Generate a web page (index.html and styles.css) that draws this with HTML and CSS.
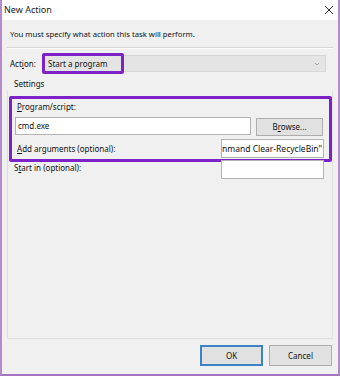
FILE: index.html
```html
<!DOCTYPE html>
<html>
<head>
<meta charset="utf-8">
<link rel="stylesheet" href="styles.css">
</head>
<body>
<div class="window">
  <div class="titlebar">
    <span class="title">New Action</span>
    <svg class="close" width="10" height="10" viewBox="0 0 10 10"><path d="M1 1L9 9M9 1L1 9" stroke="#333" stroke-width="1" fill="none"/></svg>
  </div>
  <div class="body">
    <p class="intro">You must specify what action this task will perform.</p>
    <div class="sep"></div>
    <div class="action-row">
      <span class="lbl">Act<u>i</u>on:</span>
      <div class="combo">
        <span class="combo-text">Start a program</span>
        <svg class="arrow" width="6" height="4" viewBox="0 0 6 4"><path d="M1 1L3 3L5 1" stroke="#a0a0a0" stroke-width="1" fill="none"/></svg>
        <div class="mark"></div>
      </div>
    </div>
    <div class="settings-label">Settings</div>
    <div class="group">
      <div class="hl">
        <div class="field-label"><u>P</u>rogram/script:</div>
        <div class="prog-row">
          <div class="input wide">cmd.exe</div>
          <div class="btn">B<u>r</u>owse...</div>
        </div>
        <div class="arg-row">
          <span class="arg-label"><u>A</u>dd arguments (optional):</span>
          <div class="input short args">nmand Clear-RecycleBin"</div>
        </div>
      </div>
      <div class="arg-row start">
        <span class="arg-label">S<u>t</u>art in (optional):</span>
        <div class="input short"></div>
      </div>
    </div>
    <div class="footer">
      <div class="btn ok">OK</div>
      <div class="btn cancel">Cancel</div>
    </div>
  </div>
</div>
</body>
</html>
```
FILE: styles.css
```css
* { box-sizing: border-box; }
html, body { margin: 0; padding: 0; }
body {
  font-family: "Noto Sans", "Open Sans", sans-serif;
  font-size: 8px;
  color: #111;
  background: #fff;
}
.window {
  width: 340px;
  height: 376px;
  border-left: 2px solid #b48acb;
  border-right: 2px solid #b48acb;
  border-bottom: 2px solid #a574c0;
  display: flex;
  flex-direction: column;
  overflow: hidden;
}
.titlebar {
  height: 20px;
  background: #fff;
  display: flex;
  align-items: center;
  justify-content: space-between;
  padding: 0 4px 1px 2px;
  flex: none;
}
.title { font-size: 9px; color: #222; }
.body {
  flex: 1;
  background: #f0f0f0;
  display: flex;
  flex-direction: column;
  padding: 0 5px 0 5px;
}
.intro {
  margin: 7px 0 0 3px;
  line-height: 14px;
  font-size: 7.7px;
}
.sep {
  margin-top: 6px;
  height: 2px;
  border-top: 1px solid #d6d6d6;
  border-bottom: 1px solid #fbfbfb;
}
.action-row {
  margin-top: 4px;
  height: 21px;
  display: flex;
  align-items: center;
}
.lbl { width: 37px; padding-left: 3px; }
.combo {
  position: relative;
  width: 282px;
  height: 17px;
  background: #e4e4e4;
  border: 1px solid #d6d6d6;
  display: flex;
  align-items: center;
  justify-content: space-between;
  padding: 0 5px 0 3px;
}
.mark {
  position: absolute;
  left: -3px;
  top: -3px;
  width: 82px;
  height: 21px;
  border: 3px solid #7d22c9;
  border-radius: 2px;
}
.settings-label {
  margin-top: 3px;
  line-height: 14px;
  padding-left: 7px;
}
.group {
  flex: 1;
  border: 1px solid #dedede;
  border-top: none;
  border-right-color: #e2e2e2;
  padding-top: 5px;
}
.hl {
  margin-left: 1px;
  width: 323px;
  height: 66px;
  border: 3px solid #7d22c9;
  border-radius: 2px;
  padding: 2px 5px 0 3px;
}
.field-label { line-height: 12px; padding-left: 2px; }
.prog-row {
  display: flex;
  align-items: flex-start;
  margin-top: 4px;
}
.input {
  background: #fff;
  border: 1px solid #b4b4b4;
  height: 18px;
  line-height: 16px;
  padding-left: 2px;
  white-space: nowrap;
  overflow: hidden;
}
.wide { width: 236px; }
.short { width: 103px; height: 19px; line-height: 17px; padding-left: 1px; }
.args { display: flex; justify-content: flex-end; padding-right: 1px; font-size: 8.5px; }
.btn {
  background: #e1e1e1;
  border: 1px solid #adadad;
  text-align: center;
  height: 18px;
  line-height: 16px;
}
.prog-row .btn { width: 67px; margin-left: 5px; margin-top: 1px; }
.arg-row {
  display: flex;
  align-items: center;
  justify-content: space-between;
  margin-top: 4px;
}
.arg-label { padding-left: 2px; }
.hl .arg-row { margin-top: 3px; }
.start {
  margin-top: -2px;
  padding-left: 4px;
  padding-right: 8px;
}
.start .arg-label { align-self: flex-start; margin-top: 2px; }
.footer {
  height: 35px;
  display: flex;
  justify-content: flex-end;
  align-items: center;
  gap: 6px;
  padding-right: 1px;
  padding-bottom: 3px;
}
.footer .btn { width: 63px; height: 21px; line-height: 19px; }
.ok { border: 2px solid #3b83c4; line-height: 17px !important; }
```
